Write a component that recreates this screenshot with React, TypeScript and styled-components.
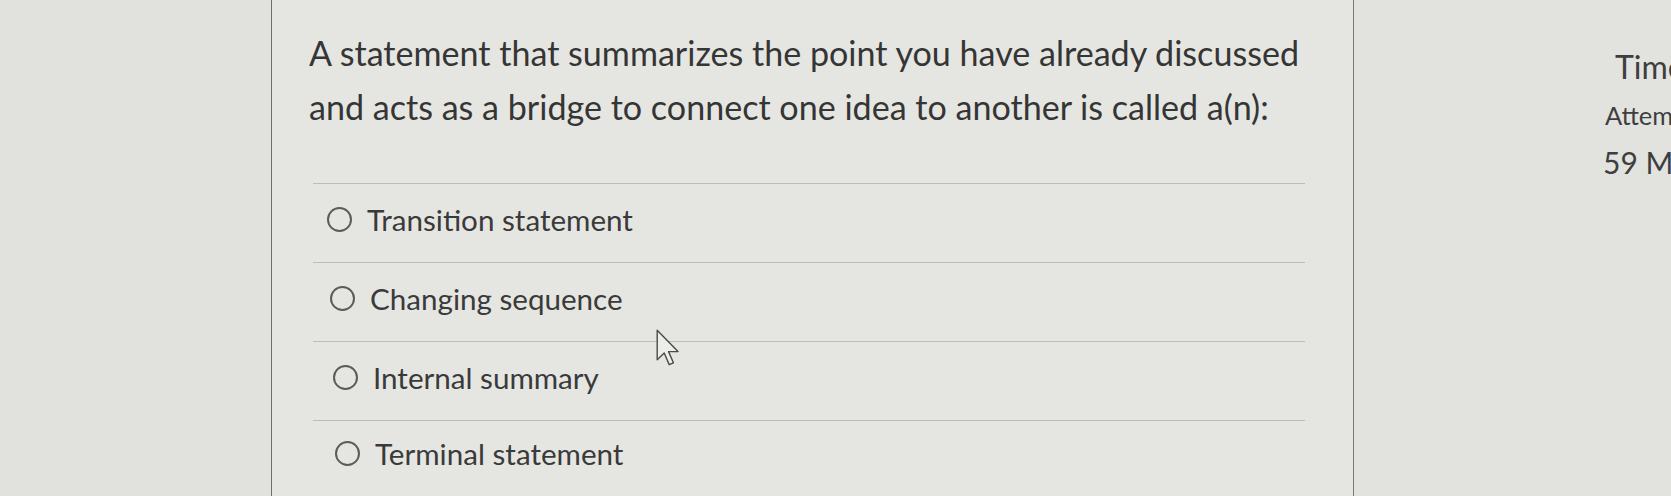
import React from "react";
import styled, { createGlobalStyle } from "styled-components";

const Global = createGlobalStyle`
  html, body { margin: 0; padding: 0; }
  body {
    background: #e2e3df;
    font-family: Lato, "Open Sans", "Liberation Sans", sans-serif;
    color: #363636;
    overflow: hidden;
  }
`;

const Page = styled.div`
  position: relative;
  display: flex;
  width: 1671px;
  height: 496px;
  overflow: hidden;
  background: #e2e3df;
`;

const Sidebar = styled.aside`
  flex: 0 0 271px;
  border-right: 1px solid #6e6f6c;
  background: #e1e2de;
`;

const Main = styled.main`
  flex: 0 0 1082px;
  box-sizing: border-box;
  padding: 26px 48px 0 37px;
  border-right: 1px solid #7a7b78;
  background: #e5e6e2;
`;

const Question = styled.p`
  margin: 0 0 49px 0;
  font-size: 34.1px;
  line-height: 54px;
  color: #353535;
`;

const Answers = styled.ul`
  list-style: none;
  margin: 0 0 0 4px;
  padding: 0;
`;

const Answer = styled.li`
  display: flex;
  align-items: center;
  gap: 15px;
  height: 79px;
  box-sizing: border-box;
  padding: 0 0 7px 14px;
  border-top: 1.5px solid #bcbdba;
  font-size: 29.6px;
  color: #3a3a3a;
  &:nth-child(2) { padding-left: 17px; }
  &:nth-child(3) { padding-left: 20px; }
  &:nth-child(4) { padding-left: 22px; padding-bottom: 14px; }
`;

const Radio = styled.span`
  flex: 0 0 auto;
  width: 21px;
  height: 21px;
  border-radius: 50%;
  border: 2.5px solid #5b5b5b;
  background: transparent;
`;

const Side = styled.aside`
  flex: 1 1 auto;
  box-sizing: border-box;
  padding: 44px 0 0 261px;
  white-space: nowrap;
  overflow: hidden;
  color: #3e3e3e;
`;

const SideLine = styled.div<{ $size: number; $lh: number; $indent: number }>`
  font-size: ${(p) => p.$size}px;
  line-height: ${(p) => p.$lh}px;
  margin-left: ${(p) => p.$indent}px;
`;

const Cursor = styled.svg`
  position: absolute;
  left: 656px;
  top: 329px;
`;

const options = [
  "Transition statement",
  "Changing sequence",
  "Internal summary",
  "Terminal statement",
];

export default function App() {
  return (
    <>
      <Global />
      <Page>
        <Sidebar />
        <Main>
          <Question>
            A statement that summarizes the point you have already discussed
            <br />
            and acts as a bridge to connect one idea to another is called a(n):
          </Question>
          <Answers>
            {options.map((o) => (
              <Answer key={o}>
                <Radio />
                <span>{o}</span>
              </Answer>
            ))}
          </Answers>
        </Main>
        <Side>
          <SideLine $size={32} $lh={46} $indent={0}>Time Running:</SideLine>
          <SideLine $size={25.5} $lh={50} $indent={-10}>Attempt due: Jun 6 at 11:59pm</SideLine>
          <SideLine $size={30} $lh={44} $indent={-12}>59 Minutes, 40 Seconds</SideLine>
        </Side>
        <Cursor width="24" height="38" viewBox="0 0 12 19">
          <path
            d="M0.6 0.6 L0.6 15.4 L4.1 12 L6.6 17.8 L8.7 16.9 L6.3 11.3 L11 11.3 Z"
            fill="#eceeea"
            stroke="#4a4a4a"
            strokeWidth="0.7"
            strokeLinejoin="round"
          />
        </Cursor>
      </Page>
    </>
  );
}
